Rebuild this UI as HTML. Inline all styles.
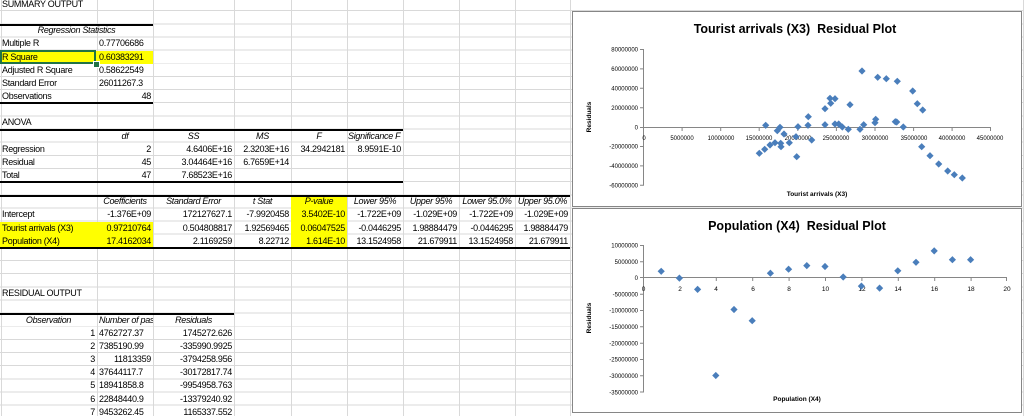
<!DOCTYPE html>
<html><head><meta charset="utf-8">
<style>
html,body{margin:0;padding:0;background:#fff;}
body{width:1024px;height:416px;position:relative;overflow:hidden;
 font-family:"Liberation Sans",Arial,sans-serif;font-size:9px;color:#000;
 background-image:repeating-linear-gradient(to bottom,transparent 0,transparent 12.15px,#d9d9d9 12.15px,#d9d9d9 13.15px);
 background-position:0 -2px;}
.v{position:absolute;top:0;height:416px;width:1px;background:#d9d9d9;}
.c{position:absolute;height:13px;line-height:13px;white-space:nowrap;overflow:hidden;padding:0 2px;box-sizing:border-box;letter-spacing:-0.3px;}
.r{text-align:right}.m{text-align:center}.i{font-style:italic}
.y{background:#ffff00}
.t{position:absolute;height:2px;background:#000;}
</style></head><body>
<div class="v" style="left:1px"></div>
<div class="v" style="left:97px"></div>
<div class="v" style="left:153px"></div>
<div class="v" style="left:234px"></div>
<div class="v" style="left:291px"></div>
<div class="v" style="left:347px"></div>
<div class="v" style="left:403px"></div>
<div class="v" style="left:459px"></div>
<div class="v" style="left:515px"></div>
<div class="v" style="left:570px"></div>
<div class="v" style="left:1023px"></div>

<div class="c y" style="left:0;top:50.6px;width:153px"></div>
<div class="c y" style="left:291px;top:195.25px;width:56px;height:52.6px"></div>
<div class="c y" style="left:0;top:221.55px;width:153px;height:26.3px"></div>

<div class="c" style="left:0;top:-2px;width:200px">SUMMARY OUTPUT</div>
<div class="c m i" style="left:0;top:24.3px;width:153px">Regression Statistics</div>
<div class="c" style="left:0;top:37.45px;width:97px">Multiple R</div>
<div class="c" style="left:97px;top:37.45px;width:56px">0.77706686</div>
<div class="c" style="left:0;top:50.6px;width:97px">R Square</div>
<div class="c" style="left:97px;top:50.6px;width:56px">0.60383291</div>
<div class="c" style="left:0;top:63.75px;width:97px">Adjusted R Square</div>
<div class="c" style="left:97px;top:63.75px;width:56px">0.58622549</div>
<div class="c" style="left:0;top:76.9px;width:97px">Standard Error</div>
<div class="c" style="left:97px;top:76.9px;width:56px">26011267.3</div>
<div class="c" style="left:0;top:90.05px;width:97px">Observations</div>
<div class="c r" style="left:97px;top:90.05px;width:56px">48</div>
<div style="position:absolute;left:0;top:49.6px;width:96px;height:14px;border:2px solid #217346;box-sizing:border-box"></div>
<div style="position:absolute;left:93px;top:61px;width:5px;height:5px;background:#217346;border:1px solid #fff"></div>

<div class="c" style="left:0;top:116.35px;width:97px">ANOVA</div>
<div class="c m i" style="left:97px;top:129.5px;width:56px">df</div>
<div class="c m i" style="left:153px;top:129.5px;width:81px">SS</div>
<div class="c m i" style="left:234px;top:129.5px;width:57px">MS</div>
<div class="c m i" style="left:291px;top:129.5px;width:56px">F</div>
<div class="c i" style="left:347px;top:129.5px;width:60px;overflow:visible;padding-left:1px">Significance F</div>
<div class="c" style="left:0;top:142.65px;width:97px">Regression</div>
<div class="c r" style="left:97px;top:142.65px;width:56px">2</div>
<div class="c r" style="left:153px;top:142.65px;width:81px">4.6406E+16</div>
<div class="c r" style="left:234px;top:142.65px;width:57px">2.3203E+16</div>
<div class="c r" style="left:291px;top:142.65px;width:56px">34.2942181</div>
<div class="c r" style="left:347px;top:142.65px;width:56px">8.9591E-10</div>
<div class="c" style="left:0;top:155.8px;width:97px">Residual</div>
<div class="c r" style="left:97px;top:155.8px;width:56px">45</div>
<div class="c r" style="left:153px;top:155.8px;width:81px">3.04464E+16</div>
<div class="c r" style="left:234px;top:155.8px;width:57px">6.7659E+14</div>
<div class="c" style="left:0;top:168.95px;width:97px">Total</div>
<div class="c r" style="left:97px;top:168.95px;width:56px">47</div>
<div class="c r" style="left:153px;top:168.95px;width:81px">7.68523E+16</div>

<div class="c m i" style="left:97px;top:195.25px;width:56px">Coefficients</div>
<div class="c m i" style="left:153px;top:195.25px;width:81px">Standard Error</div>
<div class="c m i" style="left:234px;top:195.25px;width:57px">t Stat</div>
<div class="c m i" style="left:291px;top:195.25px;width:56px">P-value</div>
<div class="c m i" style="left:347px;top:195.25px;width:56px">Lower 95%</div>
<div class="c m i" style="left:403px;top:195.25px;width:56px">Upper 95%</div>
<div class="c m i" style="left:459px;top:195.25px;width:56px">Lower 95.0%</div>
<div class="c m i" style="left:515px;top:195.25px;width:55px">Upper 95.0%</div>

<div class="c" style="left:0;top:208.4px;width:97px">Intercept</div>
<div class="c r" style="left:97px;top:208.4px;width:56px">-1.376E+09</div>
<div class="c r" style="left:153px;top:208.4px;width:81px">172127627.1</div>
<div class="c r" style="left:234px;top:208.4px;width:57px">-7.9920458</div>
<div class="c r" style="left:291px;top:208.4px;width:56px">3.5402E-10</div>
<div class="c r" style="left:347px;top:208.4px;width:56px">-1.722E+09</div>
<div class="c r" style="left:403px;top:208.4px;width:56px">-1.029E+09</div>
<div class="c r" style="left:459px;top:208.4px;width:56px">-1.722E+09</div>
<div class="c r" style="left:515px;top:208.4px;width:55px">-1.029E+09</div>

<div class="c" style="left:0;top:221.55px;width:97px">Tourist arrivals (X3)</div>
<div class="c r" style="left:97px;top:221.55px;width:56px">0.97210764</div>
<div class="c r" style="left:153px;top:221.55px;width:81px">0.504808817</div>
<div class="c r" style="left:234px;top:221.55px;width:57px">1.92569465</div>
<div class="c r" style="left:291px;top:221.55px;width:56px">0.06047525</div>
<div class="c r" style="left:347px;top:221.55px;width:56px">-0.0446295</div>
<div class="c r" style="left:403px;top:221.55px;width:56px">1.98884479</div>
<div class="c r" style="left:459px;top:221.55px;width:56px">-0.0446295</div>
<div class="c r" style="left:515px;top:221.55px;width:55px">1.98884479</div>

<div class="c" style="left:0;top:234.7px;width:97px">Population (X4)</div>
<div class="c r" style="left:97px;top:234.7px;width:56px">17.4162034</div>
<div class="c r" style="left:153px;top:234.7px;width:81px">2.1169259</div>
<div class="c r" style="left:234px;top:234.7px;width:57px">8.22712</div>
<div class="c r" style="left:291px;top:234.7px;width:56px">1.614E-10</div>
<div class="c r" style="left:347px;top:234.7px;width:56px">13.1524958</div>
<div class="c r" style="left:403px;top:234.7px;width:56px">21.679911</div>
<div class="c r" style="left:459px;top:234.7px;width:56px">13.1524958</div>
<div class="c r" style="left:515px;top:234.7px;width:55px">21.679911</div>

<div class="c" style="left:0;top:287.3px;width:150px">RESIDUAL OUTPUT</div>
<div class="c m i" style="left:0;top:313.6px;width:97px">Observation</div>
<div class="c i" style="left:97px;top:313.6px;width:56px">Number of pas</div>
<div class="c m i" style="left:153px;top:313.6px;width:81px">Residuals</div>

<div class="c r" style="left:0;top:326.75px;width:97px">1</div><div class="c" style="left:97px;top:326.75px;width:56px">4762727.37</div><div class="c r" style="left:153px;top:326.75px;width:81px">1745272.626</div>
<div class="c r" style="left:0;top:339.9px;width:97px">2</div><div class="c" style="left:97px;top:339.9px;width:56px">7385190.99</div><div class="c r" style="left:153px;top:339.9px;width:81px">-335990.9925</div>
<div class="c r" style="left:0;top:353.05px;width:97px">3</div><div class="c r" style="left:97px;top:353.05px;width:56px">11813359</div><div class="c r" style="left:153px;top:353.05px;width:81px">-3794258.956</div>
<div class="c r" style="left:0;top:366.2px;width:97px">4</div><div class="c" style="left:97px;top:366.2px;width:56px">37644117.7</div><div class="c r" style="left:153px;top:366.2px;width:81px">-30172817.74</div>
<div class="c r" style="left:0;top:379.35px;width:97px">5</div><div class="c" style="left:97px;top:379.35px;width:56px">18941858.8</div><div class="c r" style="left:153px;top:379.35px;width:81px">-9954958.763</div>
<div class="c r" style="left:0;top:392.5px;width:97px">6</div><div class="c" style="left:97px;top:392.5px;width:56px">22848440.9</div><div class="c r" style="left:153px;top:392.5px;width:81px">-13379240.92</div>
<div class="c r" style="left:0;top:405.65px;width:97px">7</div><div class="c" style="left:97px;top:405.65px;width:56px">9453262.45</div><div class="c r" style="left:153px;top:405.65px;width:81px">1165337.552</div>

<div class="t" style="left:0;top:23.5px;width:153px"></div>
<div class="t" style="left:0;top:102.4px;width:153px"></div>
<div class="t" style="left:0;top:128.7px;width:403px"></div>
<div class="t" style="left:0;top:181.3px;width:403px"></div>
<div class="t" style="left:0;top:194.5px;width:570px"></div>
<div class="t" style="left:0;top:247px;width:570px"></div>
<div class="t" style="left:0;top:312.8px;width:234px"></div>

<svg style="position:absolute;left:0;top:0" width="1024" height="416" viewBox="0 0 1024 416" font-family="Liberation Sans, Arial, sans-serif">
<defs><path id="d" d="M0,-3.6 L3.6,0 L0,3.6 L-3.6,0 Z" fill="#4a7ebb"/></defs>
<rect x="572.5" y="11.5" width="449" height="195" fill="#fff" stroke="#868686"/>
<text x="795" y="33" font-size="12.5" font-weight="bold" text-anchor="middle">Tourist arrivals (X3)&#160; Residual Plot</text>
<g stroke="#868686" stroke-width="1">
<line x1="643.5" y1="49" x2="643.5" y2="185"/>
<line x1="643" y1="127.5" x2="990" y2="127.5"/>
<path d="M640 49.5h4M640 68.9h4M640 88.3h4M640 107.7h4M640 127.5h4M640 146.5h4M640 165.9h4M640 185.3h4"/>
<path d="M643.5 127v4M682.1 127v4M720.7 127v4M759.2 127v4M797.8 127v4M836.4 127v4M875 127v4M913.6 127v4M952.1 127v4M990.5 127v4"/>
</g>
<g font-size="6" text-anchor="end">
<text x="638" y="51.5">80000000</text><text x="638" y="71">60000000</text><text x="638" y="90.5">40000000</text><text x="638" y="110">20000000</text><text x="638" y="129.5">0</text><text x="638" y="148.5">-20000000</text><text x="638" y="168">-40000000</text><text x="638" y="187.5">-60000000</text>
</g>
<g font-size="6" text-anchor="middle">
<text x="644" y="140">0</text><text x="682" y="140">5000000</text><text x="721" y="140">10000000</text><text x="759" y="140">15000000</text><text x="798" y="140">20000000</text><text x="836" y="140">25000000</text><text x="875" y="140">30000000</text><text x="914" y="140">35000000</text><text x="952" y="140">40000000</text><text x="990" y="140">45000000</text>
</g>
<text x="817" y="196" font-size="6.5" font-weight="bold" text-anchor="middle">Tourist arrivals (X3)</text>
<text transform="translate(591,117) rotate(-90)" font-size="6.5" font-weight="bold" text-anchor="middle">Residuals</text>
<g>
<use href="#d" x="759.3" y="153.3"/><use href="#d" x="764.7" y="149.3"/><use href="#d" x="765.7" y="125.3"/><use href="#d" x="770" y="145"/><use href="#d" x="775" y="142.7"/><use href="#d" x="777.3" y="130.7"/><use href="#d" x="780" y="127.3"/><use href="#d" x="780.7" y="143.3"/><use href="#d" x="781" y="146.7"/><use href="#d" x="784" y="134"/><use href="#d" x="789.3" y="142.7"/><use href="#d" x="796" y="136.7"/><use href="#d" x="796.7" y="156.7"/><use href="#d" x="798" y="126.7"/><use href="#d" x="808" y="125.3"/><use href="#d" x="808.3" y="116.7"/><use href="#d" x="811.7" y="140"/><use href="#d" x="825" y="108.7"/><use href="#d" x="825" y="124.7"/><use href="#d" x="830" y="98.3"/><use href="#d" x="830.7" y="103.3"/><use href="#d" x="835" y="98.7"/><use href="#d" x="835" y="124"/><use href="#d" x="838.7" y="124"/><use href="#d" x="842.3" y="127"/><use href="#d" x="848.3" y="129.3"/><use href="#d" x="850" y="104.7"/><use href="#d" x="860" y="129.3"/><use href="#d" x="862" y="71"/><use href="#d" x="863.7" y="124.7"/><use href="#d" x="875" y="122.7"/><use href="#d" x="875.7" y="119.3"/><use href="#d" x="877.7" y="77.3"/><use href="#d" x="886.3" y="78.7"/><use href="#d" x="895.3" y="121.7"/><use href="#d" x="897.3" y="81.3"/><use href="#d" x="896.7" y="122"/><use href="#d" x="903.3" y="127"/><use href="#d" x="912.7" y="91"/><use href="#d" x="917.3" y="103.7"/><use href="#d" x="921.7" y="146.7"/><use href="#d" x="922.7" y="110"/><use href="#d" x="930" y="155.7"/><use href="#d" x="938.7" y="164"/><use href="#d" x="947.7" y="171"/><use href="#d" x="954.3" y="174.7"/><use href="#d" x="962.3" y="178"/>
</g>

<rect x="572.5" y="208.5" width="449" height="204" fill="#fff" stroke="#868686"/>
<text x="797" y="230" font-size="12.5" font-weight="bold" text-anchor="middle">Population (X4)&#160; Residual Plot</text>
<g stroke="#868686" stroke-width="1">
<line x1="643.5" y1="245" x2="643.5" y2="392"/>
<line x1="643" y1="277.5" x2="1007" y2="277.5"/>
<path d="M640 245.5h4M640 261.8h4M640 277.5h4M640 294.2h4M640 310.5h4M640 326.8h4M640 343.2h4M640 359.5h4M640 375.8h4M640 392h4"/>
<path d="M643.5 277v4M679.9 277v4M716.3 277v4M752.7 277v4M789.1 277v4M825.5 277v4M861.9 277v4M898.3 277v4M934.7 277v4M971.1 277v4M1006.5 277v4"/>
</g>
<g font-size="6" text-anchor="end">
<text x="638" y="247.5">10000000</text><text x="638" y="264">5000000</text><text x="638" y="280">0</text><text x="638" y="296.5">-5000000</text><text x="638" y="312.5">-10000000</text><text x="638" y="329">-15000000</text><text x="638" y="345.5">-20000000</text><text x="638" y="361.5">-25000000</text><text x="638" y="378">-30000000</text><text x="638" y="394.5">-35000000</text>
</g>
<g font-size="6.5" text-anchor="middle">
<text x="643.5" y="291">0</text><text x="680" y="291">2</text><text x="716" y="291">4</text><text x="753" y="291">6</text><text x="789" y="291">8</text><text x="825.5" y="291">10</text><text x="862" y="291">12</text><text x="898" y="291">14</text><text x="934.5" y="291">16</text><text x="971" y="291">18</text><text x="1007" y="291">20</text>
</g>
<text x="797" y="401" font-size="6.5" font-weight="bold" text-anchor="middle">Population (X4)</text>
<text transform="translate(591,318) rotate(-90)" font-size="6.5" font-weight="bold" text-anchor="middle">Residuals</text>
<g>
<use href="#d" x="661.2" y="271.3"/><use href="#d" x="679.4" y="278.1"/><use href="#d" x="697.6" y="289.4"/><use href="#d" x="715.8" y="375.5"/><use href="#d" x="734" y="309.5"/><use href="#d" x="752.2" y="320.7"/><use href="#d" x="770.4" y="273.2"/><use href="#d" x="788.6" y="269.2"/><use href="#d" x="806.8" y="265.6"/><use href="#d" x="825" y="266.5"/><use href="#d" x="843.2" y="277"/><use href="#d" x="861.4" y="286.1"/><use href="#d" x="879.6" y="288.1"/><use href="#d" x="897.8" y="270.8"/><use href="#d" x="916" y="262.3"/><use href="#d" x="934.2" y="250.9"/><use href="#d" x="952.4" y="259.7"/><use href="#d" x="970.6" y="259.7"/>
</g>
</svg>
</body></html>
